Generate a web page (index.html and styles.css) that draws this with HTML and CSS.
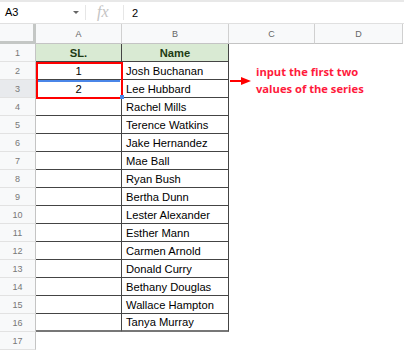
FILE: index.html
```html
<!DOCTYPE html>
<html lang="en">
<head>
    <meta charset="UTF-8">
    <title>Sheet</title>
    <link rel="stylesheet" href="styles.css">
</head>
<body>
    <div class="formula-bar">
        <div class="name-box">A3 <span class="caret"></span></div>
        <div class="fx">fx</div>
        <div class="value">2</div>
    </div>
    <div class="sheet">
        <div class="grid">
            <div class="corner"></div>
            <div class="col-head">A</div>
            <div class="col-head">B</div>
            <div class="col-head">C</div>
            <div class="col-head last">D</div>

            <div class="row-head">1</div><div class="cell title">SL.</div><div class="cell title">Name</div><div class="empty"></div><div class="empty"></div>
            <div class="row-head">2</div><div class="cell num">1</div><div class="cell">Josh Buchanan</div><div class="empty"></div><div class="empty"></div>
            <div class="row-head sel">3</div><div class="cell num">2</div><div class="cell">Lee Hubbard</div><div class="empty"></div><div class="empty"></div>
            <div class="row-head">4</div><div class="cell"></div><div class="cell">Rachel Mills</div><div class="empty"></div><div class="empty"></div>
            <div class="row-head">5</div><div class="cell"></div><div class="cell">Terence Watkins</div><div class="empty"></div><div class="empty"></div>
            <div class="row-head">6</div><div class="cell"></div><div class="cell">Jake Hernandez</div><div class="empty"></div><div class="empty"></div>
            <div class="row-head">7</div><div class="cell"></div><div class="cell">Mae Ball</div><div class="empty"></div><div class="empty"></div>
            <div class="row-head">8</div><div class="cell"></div><div class="cell">Ryan Bush</div><div class="empty"></div><div class="empty"></div>
            <div class="row-head">9</div><div class="cell"></div><div class="cell">Bertha Dunn</div><div class="empty"></div><div class="empty"></div>
            <div class="row-head">10</div><div class="cell"></div><div class="cell">Lester Alexander</div><div class="empty"></div><div class="empty"></div>
            <div class="row-head">11</div><div class="cell"></div><div class="cell">Esther Mann</div><div class="empty"></div><div class="empty"></div>
            <div class="row-head">12</div><div class="cell"></div><div class="cell">Carmen Arnold</div><div class="empty"></div><div class="empty"></div>
            <div class="row-head">13</div><div class="cell"></div><div class="cell">Donald Curry</div><div class="empty"></div><div class="empty"></div>
            <div class="row-head">14</div><div class="cell"></div><div class="cell">Bethany Douglas</div><div class="empty"></div><div class="empty"></div>
            <div class="row-head">15</div><div class="cell"></div><div class="cell">Wallace Hampton</div><div class="empty"></div><div class="empty"></div>
            <div class="row-head">16</div><div class="cell end"></div><div class="cell end">Tanya Murray</div><div class="empty"></div><div class="empty"></div>
            <div class="row-head">17</div><div class="empty"></div><div class="empty"></div><div class="empty"></div><div class="empty"></div>
        </div>

        <div class="highlight"></div>
        <div class="selection"></div>
        <div class="handle"></div>
        <div class="arrow"><span class="shaft"></span><span class="head"></span></div>
        <div class="note">input the first two<br>values of the series</div>
    </div>
</body>
</html>
```

FILE: styles.css
```css
body {
    margin: 0;
    padding: 0;
    background: #fff;
    font-family: "Liberation Sans", Arial, sans-serif;
    color: #000;
}

.formula-bar {
    display: flex;
    align-items: center;
    height: 21px;
    border-top: 2px solid #e8e8e8;
    border-bottom: 1px solid #e0e0e0;
    font-size: 11px;
}

.name-box {
    width: 86px;
    box-sizing: border-box;
    padding-left: 5px;
    position: relative;
    border-right: 1px solid #e6e6e6;
    height: 15px;
    line-height: 15px;
}

.caret {
    position: absolute;
    right: 6px;
    top: 6px;
    border-left: 3px solid transparent;
    border-right: 3px solid transparent;
    border-top: 3px solid #666;
}

.fx {
    width: 38px;
    box-sizing: border-box;
    padding-left: 11px;
    font-family: "Liberation Serif", serif;
    font-style: italic;
    font-size: 16px;
    color: #c4c4c4;
    border-right: 1px solid #e6e6e6;
    height: 15px;
    line-height: 14px;
}

.value {
    padding-left: 8px;
}

.sheet {
    position: relative;
}

.grid {
    display: grid;
    grid-template-columns: 36px 86px 107px 86px 88px;
    grid-template-rows: 20px repeat(17, 18px);
}

.corner {
    background: #f8f9fa;
    border-right: 3px solid #c4c7c5;
    border-bottom: 3px solid #c4c7c5;
}

.col-head {
    background: #f8f9fa;
    border-right: 1px solid #d0d0d0;
    border-bottom: 1px solid #c4c4c4;
    color: #666;
    font-size: 9px;
    display: flex;
    align-items: center;
    justify-content: center;
}

.row-head {
    background: #f8f9fa;
    border-right: 1px solid #c4c4c4;
    border-bottom: 1px solid #e2e2e2;
    color: #777;
    font-size: 9px;
    display: flex;
    align-items: center;
    justify-content: center;
}

.row-head.sel {
    background: #e8eaed;
}

.cell {
    border-right: 1px solid #444;
    border-bottom: 1px solid #444;
    font-size: 11.2px;
    padding-left: 4px;
    display: flex;
    align-items: center;
    white-space: nowrap;
}

.cell.num,
.cell.title {
    justify-content: center;
    padding-left: 0;
}

.cell.title {
    background: #d9ead3;
    font-weight: bold;
    color: #1e3b14;
}

.cell.end {
    border-bottom: 2px solid #777;
}

.highlight {
    position: absolute;
    left: 36px;
    top: 38px;
    width: 83px;
    height: 33px;
    border: 2px solid #ff0000;
}

.selection {
    position: absolute;
    left: 38px;
    top: 56px;
    width: 82px;
    height: 2px;
    background: #4a86e8;
}

.handle {
    position: absolute;
    left: 120px;
    top: 71px;
    width: 4px;
    height: 4px;
    background: #4a86e8;
}

.arrow {
    position: absolute;
    left: 230px;
    top: 53px;
    display: flex;
    align-items: center;
}

.shaft {
    width: 11px;
    height: 2px;
    background: #ff0000;
}

.head {
    border-top: 4px solid transparent;
    border-bottom: 4px solid transparent;
    border-left: 10px solid #ff0000;
}

.note {
    position: absolute;
    left: 256px;
    top: 39px;
    font-family: "Open Sans", sans-serif;
    font-weight: bold;
    font-size: 11.2px;
    line-height: 17px;
    color: #ff1a3c;
}
```
